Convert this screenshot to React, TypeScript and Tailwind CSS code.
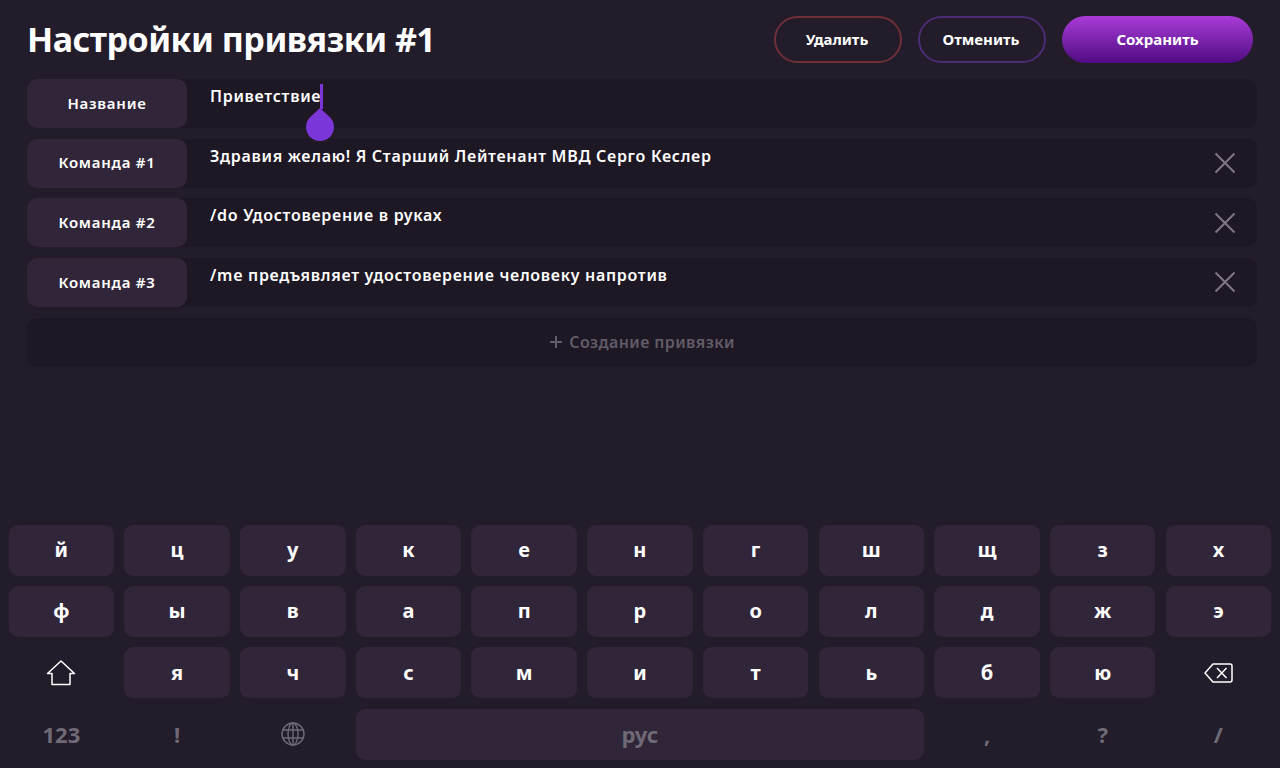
import React from "react";

const rows1 = ["й","ц","у","к","е","н","г","ш","щ","з","х"];
const rows2 = ["ф","ы","в","а","п","р","о","л","д","ж","э"];
const rows3 = ["я","ч","с","м","и","т","ь","б","ю"];

function Key({ c }: { c: string }) {
  return (
    <div className="flex items-center justify-center rounded-[9px] bg-[#312639] text-[20px] font-bold text-white">{c}</div>
  );
}

function Ghost({ children }: { children: React.ReactNode }) {
  return <div className="flex items-center justify-center text-[22px] font-bold text-[#6f6a76]">{children}</div>;
}

function Row({ label, value, close }: { label: string; value: string; close?: boolean }) {
  return (
    <div className="flex h-[49px] rounded-[10px] bg-[#1e1724]">
      <div className="flex w-[160px] shrink-0 items-center justify-center rounded-[10px] bg-[#312639] pb-[1px] text-[15px] font-semibold tracking-[0.75px] text-white">
        {label}
      </div>
      <div className="flex-1 pl-[23px] pt-[7px] text-[16px] font-semibold leading-[20px] tracking-[0.7px] text-white">{value}</div>
      {close && (
        <div className="flex w-[64px] items-center justify-center">
          <svg width="22" height="22" viewBox="0 0 22 22" fill="none" stroke="#7e7885" strokeWidth="2">
            <path d="M1.5 1.5 L20.5 20.5 M20.5 1.5 L1.5 20.5" />
          </svg>
        </div>
      )}
    </div>
  );
}

export default function App() {
  return (
    <div className="flex h-[768px] w-[1280px] flex-col overflow-hidden bg-[#231c2a] font-['Noto_Sans',sans-serif]">
      <div className="flex h-[79px] items-start justify-between pl-[27px] pr-[27px] pt-[16px]">
        <h1 className="-mt-[1px] text-[34px] font-bold leading-[48px] tracking-[-0.5px] text-white">Настройки привязки #1</h1>
        <div className="flex gap-[16px]">
          <button className="h-[47px] w-[128px] rounded-full border-2 border-[#6d2f38] bg-[#231c2a] pr-[2px] text-[15px] font-bold text-white">Удалить</button>
          <button className="h-[47px] w-[128px] rounded-full border-2 border-[#4a2d75] bg-[#231c2a] pr-[2px] text-[15px] font-bold text-white">Отменить</button>
          <button className="h-[47px] w-[191px] rounded-full bg-gradient-to-b from-[#aa3bd8] to-[#510a84] text-[15px] font-bold text-white">Сохранить</button>
        </div>
      </div>

      <div className="flex flex-col gap-[10.67px] pl-[27px] pr-[23px]">
        <div className="relative">
          <Row label="Название" value="Приветствие" />
          <div className="absolute left-[293px] top-[5px] h-[25px] w-[3px] bg-[#7b36d9]" />
          <svg className="absolute left-[279px] top-[29px]" width="28" height="34" viewBox="0 0 28 34">
            <path d="M14 0 L24 9.2 A14 14 0 1 1 4 9.2 Z" fill="#7b36d9" />
          </svg>
        </div>
        <Row label="Команда #1" value="Здравия желаю! Я Старший Лейтенант МВД Серго Кеслер" close />
        <Row label="Команда #2" value="/do Удостоверение в руках" close />
        <Row label="Команда #3" value="/me предъявляет удостоверение человеку напротив" close />
        <div className="flex h-[49px] items-center justify-center rounded-[10px] bg-[#1e1724] pb-[1px] text-[16px] font-semibold tracking-[0.4px] text-[#625c68]">
          <svg className="mr-[6px]" width="14" height="14" viewBox="0 0 14 14" stroke="#625c68" strokeWidth="2"><path d="M7 1 V13 M1 7 H13" /></svg>
          Создание привязки
        </div>
      </div>

      <div className="mt-[158px] grid h-[235px] grid-cols-11 grid-rows-4 gap-x-[10.2px] gap-y-[10.4px] pl-[8.6px] pr-[8.8px]">
        {rows1.map((c) => <Key key={c} c={c} />)}
        {rows2.map((c) => <Key key={c} c={c} />)}
        <div className="flex items-center justify-center">
          <svg width="30" height="26" viewBox="0 0 30 26" fill="none" stroke="#fff" strokeWidth="1.5" strokeLinejoin="round">
            <path d="M15 1 L28.5 13.5 H24 V24.5 H6 V13.5 H1.5 Z" />
          </svg>
        </div>
        {rows3.map((c) => <Key key={c} c={c} />)}
        <div className="flex items-center justify-center">
          <svg width="29" height="20" viewBox="0 0 29 20" fill="none" stroke="#fff" strokeWidth="1.5" strokeLinejoin="round">
            <path d="M9 1 H26 Q28 1 28 3 V17 Q28 19 26 19 H9 L1 10 Z" />
            <path d="M13 5 L22.5 15 M22.5 5 L13 15" />
          </svg>
        </div>
        <Ghost>123</Ghost>
        <Ghost>!</Ghost>
        <Ghost>
          <svg width="24" height="24" viewBox="0 0 24 24" fill="none" stroke="#6f6a76" strokeWidth="1.4">
            <circle cx="12" cy="12" r="11" />
            <ellipse cx="12" cy="12" rx="5" ry="11" />
            <path d="M12 1 V23 M2 8 H22 M2 16 H22" />
          </svg>
        </Ghost>
        <div className="col-span-5 flex items-center justify-center rounded-[9px] bg-[#312639] text-[22px] font-bold text-[#6f6a76]">рус</div>
        <Ghost>,</Ghost>
        <Ghost>?</Ghost>
        <Ghost>/</Ghost>
      </div>
    </div>
  );
}
